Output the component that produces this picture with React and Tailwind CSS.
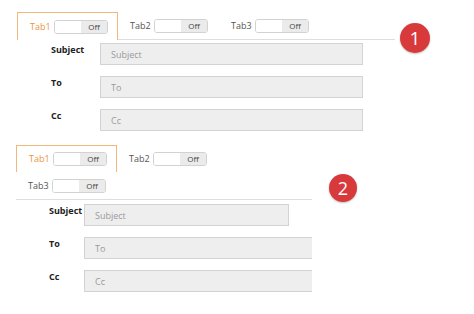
import React from 'react';

function Toggle() {
  return (
    <div className="flex h-[14px] w-[54px] shrink-0 overflow-hidden rounded-[3px] border border-[#d2d2d2]">
      <div className="w-[26px] bg-white" />
      <div className="flex flex-1 items-center justify-center bg-[#ebebeb] text-[8px] leading-none text-[#444]">Off</div>
    </div>
  );
}

function Tab({ label, active, overlap }) {
  let cls = 'flex w-[101px] items-center pl-[12px] h-[27px]';
  if (active) {
    cls += ' border border-b-0 border-[#f2b77a] bg-white';
    if (overlap) cls += ' -mb-px h-[28px]';
  }
  return (
    <div className={cls}>
      <span className={'w-[24px] text-[9px] leading-[12px] ' + (active ? 'text-[#ec9440]' : 'text-[#555]')}>{label}</span>
      <Toggle />
    </div>
  );
}

function Field({ label, labelW, inputW }) {
  return (
    <div className="flex items-start">
      <div className="shrink-0 pt-[1px] text-[9px] font-bold leading-[12px] text-[#222]" style={{ width: labelW }}>{label}</div>
      <input
        readOnly
        placeholder={label}
        className="h-[22px] shrink-0 border border-[#d3d3d3] bg-[#eeeeee] px-[10px] text-[9px] text-[#777] outline-none placeholder:text-[#9a9a9a]"
        style={{ width: inputW }}
      />
    </div>
  );
}

function Badge({ n, className }) {
  return (
    <div className={'absolute flex items-center justify-center rounded-full bg-[#d8393b] text-white shadow-[0_1px_2px_rgba(0,0,0,0.25)] ' + className}>
      {n}
    </div>
  );
}

export default function App() {
  return (
    <div className="relative h-[314px] w-[474px] overflow-hidden bg-white" style={{ fontFamily: '"Open Sans", "Noto Sans", sans-serif' }}>
      {/* layout 1: wide */}
      <div className="pl-[17px] pt-[12px]">
        <div className="flex w-[378px] border-b border-[#dedede]">
          <Tab label="Tab1" active overlap />
          <Tab label="Tab2" />
          <Tab label="Tab3" />
        </div>
        <div className="mt-[3px] flex flex-col gap-[11px] pl-[34px]">
          <Field label="Subject" labelW={49} inputW={263} />
          <Field label="To" labelW={49} inputW={263} />
          <Field label="Cc" labelW={49} inputW={263} />
        </div>
      </div>

      {/* layout 2: narrow, tabs wrap */}
      <div className="ml-[16px] mt-[14px] w-[296px] overflow-hidden">
        <div className="flex flex-wrap border-b border-[#dedede]">
          <Tab label="Tab1" active />
          <Tab label="Tab2" />
          <Tab label="Tab3" />
        </div>
        <div className="mt-[4px] flex flex-col gap-[11px] pl-[33px]">
          <Field label="Subject" labelW={35} inputW={205} />
          <Field label="To" labelW={35} inputW={263} />
          <Field label="Cc" labelW={35} inputW={263} />
        </div>
      </div>

      <Badge n="1" className="left-[400px] top-[23px] h-[30px] w-[30px] text-[19px]" />
      <Badge n="2" className="left-[329px] top-[174px] h-[28px] w-[28px] text-[18px]" />
    </div>
  );
}
